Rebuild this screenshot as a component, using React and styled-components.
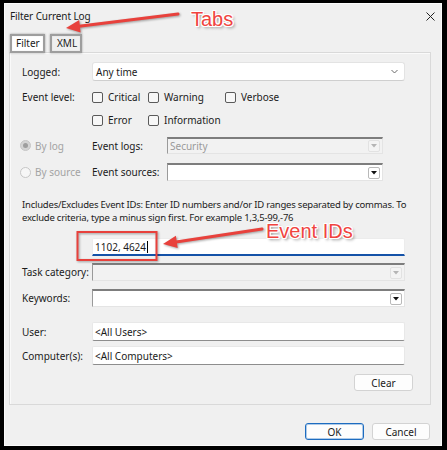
import React from 'react';
import styled, { createGlobalStyle } from 'styled-components';

const Global = createGlobalStyle`
  html, body { margin: 0; padding: 0; background: #000; }
  body { font-family: "Noto Sans", "Segoe UI", sans-serif; }
  * { box-sizing: border-box; }
`;

const Screen = styled.div`
  position: relative;
  width: 447px;
  height: 450px;
  padding: 3px 5px 4px 4px;
  background: #000;
  overflow: hidden;
`;

const Window = styled.div`
  height: 100%;
  border: 1px solid #fbfbfb;
  background: #f0f0f0;
  display: flex;
  flex-direction: column;
  font-family: "Noto Sans", sans-serif;
  font-size: 10px;
  color: #1b1b1b;
`;

const TitleBar = styled.div`
  height: 30px;
  flex: none;
  display: flex;
  align-items: center;
  justify-content: space-between;
  padding: 0 6px 6px 5px;
  font-size: 10px;
  letter-spacing: -0.1px;
`;

const CloseIcon = styled.svg`
  width: 9px;
  height: 9px;
  display: block;
`;

const TabStrip = styled.div`
  display: flex;
  gap: 5px;
  padding-left: 5px;
  height: 19px;
  margin-bottom: -1px;
  position: relative;
  z-index: 1;
  flex: none;
`;

const Tab = styled.div`
  width: ${p => p.$w}px;
  height: 19px;
  border: 2px solid #9e9e9e;
  background: ${p => (p.$active ? '#fff' : '#f0f0f0')};
  box-shadow: 0 0 2px rgba(0, 0, 0, 0.35), inset 0 0 1px rgba(0, 0, 0, 0.2);
  display: flex;
  align-items: center;
  padding-left: ${p => p.$pl}px;
  padding-bottom: 2px;
  font-size: 10px;
`;

const Panel = styled.div`
  flex: none;
  height: 353px;
  margin: 0 10px 0 4px;
  border: 1px solid #d9d9d9;
  box-shadow: inset 1px 1px 0 #fafafa;
  padding: 9px 25px 0 12px;
  display: flex;
  flex-direction: column;
`;

const Row = styled.div`
  display: flex;
  align-items: ${p => (p.$top ? 'flex-start' : 'center')};
  height: ${p => p.$h}px;
  margin-top: ${p => p.$mt || 0}px;
  margin-left: ${p => p.$ml || 0}px;
  margin-right: ${p => p.$mr || 0}px;
  padding-left: ${p => p.$indent || 0}px;
  justify-content: ${p => (p.$end ? 'flex-end' : 'flex-start')};
  flex: none;
`;

const Label = styled.div`
  width: ${p => p.$w || 70}px;
  flex: none;
  line-height: 14px;
  white-space: nowrap;
`;

const ModernCombo = styled.div`
  flex: 1;
  height: 19px;
  background: #fff;
  border: 1px solid #e3e3e3;
  border-bottom-color: #cfcfcf;
  border-radius: 3px;
  display: flex;
  align-items: center;
  justify-content: space-between;
  padding: 0 6px 0 3px;
`;

const Chevron = styled.svg`
  width: 7px;
  height: 5px;
  display: block;
`;

const CheckGrid = styled.div`
  display: grid;
  grid-template-columns: 56px 77px auto;
  grid-auto-rows: 14px;
  row-gap: 9px;
`;

const CheckItem = styled.label`
  display: flex;
  align-items: center;
  gap: 5px;
  white-space: nowrap;
`;

const CheckBox = styled.span`
  width: 11px;
  height: 11px;
  border: 1px solid #5a5a5a;
  border-radius: 2px;
  background: #f7f7f7;
  flex: none;
`;

const RadioOption = styled.div`
  width: 72px;
  flex: none;
  display: flex;
  align-items: center;
  gap: 4px;
  color: #a3a3a3;
  white-space: nowrap;
`;

const Radio = styled.span`
  width: 11px;
  height: 11px;
  border-radius: 50%;
  border: 1px solid #c6c6c6;
  background: ${p => (p.$checked ? '#d4d4d4' : '#f6f6f6')};
  display: flex;
  align-items: center;
  justify-content: center;
  flex: none;
  &::after {
    content: '';
    width: 5px;
    height: 5px;
    border-radius: 50%;
    background: ${p => (p.$checked ? '#9e9e9e' : 'transparent')};
  }
`;

const ClassicCombo = styled.div`
  width: ${p => (p.$w ? `${p.$w}px` : 'auto')};
  flex: ${p => (p.$w ? 'none' : '1')};
  height: ${p => p.$h || 18}px;
  background: ${p => (p.$disabled ? '#f2f2f2' : '#fff')};
  border-top: 2px solid #7d7d7d;
  border-left: 1px solid #9a9a9a;
  border-right: 1px solid #e4e4e4;
  border-bottom: 1px solid #e4e4e4;
  display: flex;
  align-items: center;
  justify-content: space-between;
  padding: 0 2px 0 2px;
  color: ${p => (p.$disabled ? '#9a9a9a' : '#1b1b1b')};
`;

const DropButton = styled.span`
  width: 12px;
  height: 12px;
  border: 1px solid ${p => (p.$disabled ? '#e2e2e2' : '#b9b9b9')};
  border-radius: 2px;
  background: ${p => (p.$disabled ? '#f4f4f4' : '#fff')};
  display: flex;
  align-items: center;
  justify-content: center;
  flex: none;
`;

const Tri = styled.svg`
  width: 6px;
  height: 4px;
  display: block;
`;

const HelpText = styled.div`
  margin-top: 17px;
  font-size: 9.5px;
  line-height: 13px;
  white-space: nowrap;
  letter-spacing: -0.22px;
  flex: none;
`;

const IdInput = styled.div`
  flex: 1;
  height: 18px;
  background: #fff;
  border: 1px solid #ececec;
  border-bottom: 2px solid #1452a8;
  border-radius: 2px 2px 0 0;
  display: flex;
  align-items: center;
  padding-left: 2px;
`;

const Caret = styled.span`
  width: 1px;
  height: 12px;
  background: #000;
  margin-left: 1px;
`;

const TextBox = styled.div`
  flex: 1;
  height: 19px;
  background: #fff;
  border: 1px solid #e8e8e8;
  border-bottom-color: #8d8d8d;
  border-radius: 2px;
  display: flex;
  align-items: center;
  padding-left: 2px;
`;

const Button = styled.div`
  width: ${p => p.$w || 59}px;
  height: 17px;
  border: 1px solid ${p => (p.$primary ? '#1d6cc0' : '#d3d3d3')};
  box-shadow: ${p => (p.$primary ? 'inset 0 0 0 1px rgba(29,108,192,0.35)' : 'none')};
  border-radius: 3px;
  background: #fdfdfd;
  display: flex;
  align-items: center;
  justify-content: center;
  font-size: 10px;
`;

const Footer = styled.div`
  display: flex;
  justify-content: flex-end;
  gap: 8px;
  padding: 18px 11px 0 0;
`;

const Overlay = styled.svg`
  position: absolute;
  left: 0;
  top: 0;
  width: 447px;
  height: 450px;
  pointer-events: none;
  filter: drop-shadow(1px 1px 1px rgba(0, 0, 0, 0.35));
`;

const Callout = styled.div`
  position: absolute;
  left: ${p => p.$x}px;
  top: ${p => p.$y}px;
  font-family: "Liberation Sans", Arial, sans-serif;
  font-size: 20px;
  line-height: 14px;
  color: #f0443f;
  white-space: nowrap;
  text-shadow:
    1px 0 0 #fff, -1px 0 0 #fff, 0 1px 0 #fff, 0 -1px 0 #fff,
    1px 1px 0 #fff, -1px -1px 0 #fff, 1px -1px 0 #fff, -1px 1px 0 #fff,
    2px 2px 3px rgba(0, 0, 0, 0.45);
`;

const TriDown = ({ color }) => (
  <Tri viewBox="0 0 6 4">
    <polygon points="0,0 6,0 3,3.5" fill={color} />
  </Tri>
);

export default function App() {
  const red = '#e8413c';
  return (
    <>
      <Global />
      <Screen>
        <Window>
          <TitleBar>
            <span>Filter Current Log</span>
            <CloseIcon viewBox="0 0 9 9">
              <path d="M0.5 0.5 L8.5 8.5 M8.5 0.5 L0.5 8.5" stroke="#222" strokeWidth="1" />
            </CloseIcon>
          </TitleBar>
          <TabStrip>
            <Tab $w={35} $pl={4} $active>Filter</Tab>
            <Tab $w={32} $pl={5}>XML</Tab>
          </TabStrip>
          <Panel>
            <Row $h={19}>
              <Label>Logged:</Label>
              <ModernCombo>
                <span>Any time</span>
                <Chevron viewBox="0 0 7 5">
                  <path d="M0.5 1 L3.5 4 L6.5 1" stroke="#6a6a6a" strokeWidth="1" fill="none" />
                </Chevron>
              </ModernCombo>
            </Row>
            <Row $mt={9} $h={37} $top>
              <Label>Event level:</Label>
              <CheckGrid>
                <CheckItem><CheckBox />Critical</CheckItem>
                <CheckItem><CheckBox />Warning</CheckItem>
                <CheckItem><CheckBox />Verbose</CheckItem>
                <CheckItem><CheckBox />Error</CheckItem>
                <CheckItem><CheckBox />Information</CheckItem>
              </CheckGrid>
            </Row>
            <Row $mt={10} $h={17} $ml={-2}>
              <RadioOption><Radio $checked />By log</RadioOption>
              <Label $w={75}>Event logs:</Label>
              <ClassicCombo $w={216} $h={17} $disabled>
                <span>Security</span>
                <DropButton $disabled><TriDown color="#b5b5b5" /></DropButton>
              </ClassicCombo>
            </Row>
            <Row $mt={9} $h={18} $ml={-2}>
              <RadioOption><Radio />By source</RadioOption>
              <Label $w={75}>Event sources:</Label>
              <ClassicCombo $w={216}>
                <span />
                <DropButton><TriDown color="#111" /></DropButton>
              </ClassicCombo>
            </Row>
            <HelpText>
              Includes/Excludes Event IDs: Enter ID numbers and/or ID ranges separated by commas. To
              <br />
              exclude criteria, type a minus sign first. For example 1,3,5-99,-76
            </HelpText>
            <Row $mt={14} $h={18} $indent={70}>
              <IdInput>
                <span>1102, 4624</span>
                <Caret />
              </IdInput>
            </Row>
            <Row $mt={7} $h={18}>
              <Label>Task category:</Label>
              <ClassicCombo $disabled>
                <span />
                <DropButton $disabled><TriDown color="#b5b5b5" /></DropButton>
              </ClassicCombo>
            </Row>
            <Row $mt={8} $h={18}>
              <Label>Keywords:</Label>
              <ClassicCombo>
                <span />
                <DropButton><TriDown color="#111" /></DropButton>
              </ClassicCombo>
            </Row>
            <Row $mt={15} $h={19}>
              <Label>User:</Label>
              <TextBox>&lt;All Users&gt;</TextBox>
            </Row>
            <Row $mt={5} $h={19}>
              <Label>Computer(s):</Label>
              <TextBox>&lt;All Computers&gt;</TextBox>
            </Row>
            <Row $mt={9} $h={17} $end $mr={-8}>
              <Button $w={59}>Clear</Button>
            </Row>
          </Panel>
          <Footer>
            <Button $w={59} $primary>OK</Button>
            <Button $w={58}>Cancel</Button>
          </Footer>
        </Window>

        <Overlay viewBox="0 0 447 450">
          <line x1="178" y1="14" x2="79" y2="26.3" stroke={red} strokeWidth="3" strokeLinecap="round" />
          <polygon points="66,28 80.6,32.5 79.2,20" fill={red} />
          <line x1="262" y1="229" x2="176" y2="242" stroke={red} strokeWidth="3" strokeLinecap="round" />
          <polygon points="163,244 177.7,248 175.9,235.8" fill={red} />
          <rect x="77.5" y="232" width="79" height="28" fill="none" stroke={red} strokeWidth="2" />
        </Overlay>
        <Callout $x={191} $y={12}>Tabs</Callout>
        <Callout $x={266} $y={224}>Event IDs</Callout>
      </Screen>
    </>
  );
}
